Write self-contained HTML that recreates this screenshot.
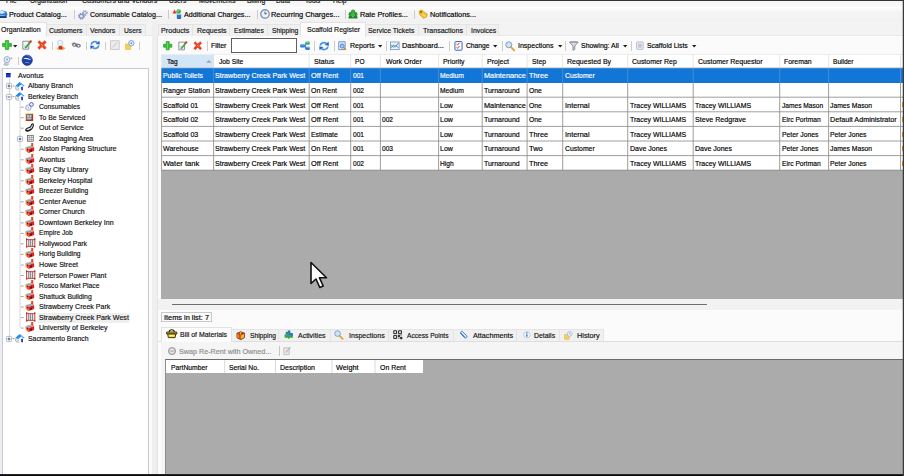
<!DOCTYPE html><html><head><meta charset="utf-8"><title>Scaffold Register</title><style>
*{box-sizing:border-box;margin:0;padding:0}
html,body{width:904px;height:476px;overflow:hidden}
body{position:relative;background:#f3f3f3;font-family:"Liberation Sans",sans-serif;font-size:8px;letter-spacing:0;color:#000;line-height:10px;-webkit-text-stroke:0.18px}
.a{position:absolute}
.t{position:absolute;white-space:nowrap;height:10px;line-height:10px;transform-origin:0 0}
.sep{position:absolute;width:1px}
.tab{position:absolute;background:#f0f0f0;border:1px solid #e4e4e4;border-bottom:none}
.tab.on{background:#fcfcfc;border-color:#e2e2e2}
svg{position:absolute;overflow:visible}
</style></head><body>
<div class="a" style="left:0px;top:0px;width:904px;height:8px;background:linear-gradient(#f4f4f4,#fbfbfb)"></div>
<div class="t" style="left:5.5px;top:-4.0px;transform:scaleX(0.820);color:#111">File</div>
<div class="t" style="left:29.5px;top:-4.0px;transform:scaleX(0.820);color:#111">Organization</div>
<div class="t" style="left:81.8px;top:-4.0px;transform:scaleX(0.876);color:#111">Customers and Vendors</div>
<div class="t" style="left:169.2px;top:-4.0px;transform:scaleX(0.828);color:#111">Users</div>
<div class="t" style="left:198.5px;top:-4.0px;transform:scaleX(0.883);color:#111">Movements</div>
<div class="t" style="left:246.5px;top:-4.0px;transform:scaleX(0.853);color:#111">Billing</div>
<div class="t" style="left:276.3px;top:-4.0px;transform:scaleX(0.820);color:#111">Data</div>
<div class="t" style="left:304.5px;top:-4.0px;transform:scaleX(0.820);color:#111">Tools</div>
<div class="t" style="left:332.8px;top:-4.0px;transform:scaleX(0.820);color:#111">Help</div>
<div class="a" style="left:0px;top:0px;width:904px;height:1px;background:linear-gradient(#111,#555)"></div>
<div class="a" style="left:0px;top:7px;width:904px;height:15px;background:linear-gradient(#ffffff,#f5f5f5 30%,#f1f1f1)"></div>
<div class="t" style="left:9.3px;top:10.2px;transform:scaleX(0.901);">Product Catalog...</div>
<div class="t" style="left:89.6px;top:10.2px;transform:scaleX(0.883);">Consumable Catalog...</div>
<div class="t" style="left:183.9px;top:10.2px;transform:scaleX(0.894);">Additional Charges...</div>
<div class="t" style="left:271.3px;top:10.2px;transform:scaleX(0.928);">Recurring Charges...</div>
<div class="t" style="left:360.0px;top:10.2px;transform:scaleX(0.913);">Rate Profiles...</div>
<div class="t" style="left:430.0px;top:10.2px;transform:scaleX(0.915);">Notifications...</div>
<div class="sep" style="left:74px;top:10px;height:9px;background:#cccccc"></div>
<div class="sep" style="left:168px;top:10px;height:9px;background:#cccccc"></div>
<div class="sep" style="left:257px;top:10px;height:9px;background:#cccccc"></div>
<div class="sep" style="left:345px;top:10px;height:9px;background:#cccccc"></div>
<div class="sep" style="left:414px;top:10px;height:9px;background:#cccccc"></div>
<svg style="left:-1px;top:9px" width="10" height="10" viewBox="0 0 10 10" preserveAspectRatio="none"><path d="M-1 4.4L2.4 1.2L7.4 2.6L8.4 5.4L7 8.6L-1 8.4z" fill="#2b7bd8"/><path d="M-0.6 3.6L2.6 1.6L6.6 3.2L3 5z" fill="#d6e8fb"/><path d="M-1 7.2h8.6v1.8H-1z" fill="#123f86"/><path d="M0.6 6.4h5" stroke="#9cc6f4" stroke-width="0.8"/></svg>
<svg style="left:77.5px;top:9.5px" width="10" height="10" viewBox="0 0 10 10" preserveAspectRatio="none"><circle cx="3.4" cy="6.2" r="2.5" fill="none" stroke="#8a92c9" stroke-width="1.7" stroke-dasharray="1.3 0.7"/><circle cx="3.4" cy="6.2" r="1.9" fill="none" stroke="#8a92c9" stroke-width="1.2"/><circle cx="6.9" cy="2.9" r="2" fill="none" stroke="#9aa2d4" stroke-width="1.5" stroke-dasharray="1.1 0.6"/><circle cx="6.9" cy="2.9" r="1.5" fill="none" stroke="#9aa2d4" stroke-width="1"/></svg>
<svg style="left:171.5px;top:9px" width="10" height="10" viewBox="0 0 10 10" preserveAspectRatio="none"><path d="M0.4 4.6L2.6 0.4L4.6 4.6z" fill="#e23a1c"/><circle cx="6.6" cy="2.6" r="2.3" fill="#3fae3a"/><circle cx="6" cy="2" r="0.8" fill="#9fe09a"/><path d="M4.8 5.2h4.4v4H4.8z" fill="#2f74d2"/><ellipse cx="7" cy="5.2" rx="2.2" ry="0.9" fill="#9cc4f4"/><ellipse cx="7" cy="9.2" rx="2.2" ry="0.7" fill="#1f58b0"/></svg>
<svg style="left:260.3px;top:9.3px" width="10" height="10" viewBox="0 0 10 10" preserveAspectRatio="none"><circle cx="5" cy="5" r="4.2" fill="#eef3fa" stroke="#7f96ba" stroke-width="1.4"/><path d="M5 2.6V5.2L6.8 4.2" fill="none" stroke="#3a4f7a" stroke-width="0.9"/></svg>
<svg style="left:348.4px;top:9.3px" width="10" height="10" viewBox="0 0 10 10" preserveAspectRatio="none"><circle cx="5" cy="2.6" r="2.2" fill="#3aa83c"/><circle cx="2.6" cy="5.2" r="2.1" fill="#2f9a35"/><circle cx="7.4" cy="5.2" r="2.1" fill="#2f9a35"/><path d="M0.4 9.4c0-2.4 1-3.2 2.4-3.2s2.2.8 2.2 3.2zM5 9.4c0-2.4 1-3.2 2.4-3.2s2.2.8 2.2 3.2z" fill="#1f8429"/><path d="M2.8 7c0-2 1-2.6 2.2-2.6S7.2 5 7.2 7z" fill="#45b848"/></svg>
<svg style="left:417.6px;top:9.3px" width="10" height="10" viewBox="0 0 10 10" preserveAspectRatio="none"><path d="M1 2.2L3.4 0.8L9.4 5.2L8.6 8L5.4 9.4L1.6 5.4z" fill="#f2c230" stroke="#c9921a" stroke-width="0.6"/><circle cx="3" cy="3" r="0.9" fill="#7a5310"/><path d="M4.6 5.4l2.6 2" stroke="#fff0a8" stroke-width="1"/></svg>
<div class="a" style="left:0px;top:36px;width:152px;height:440px;background:#fbfbfb"></div>
<div class="a" style="left:157px;top:36px;width:747px;height:440px;background:#fbfbfb;border-left:1px solid #e4e4e4"></div>
<div class="a" style="left:152px;top:22px;width:5px;height:454px;background:#efefef"></div>
<div class="a" style="left:0px;top:35px;width:152px;height:1px;background:#e9e9e9"></div>
<div class="a" style="left:157px;top:35px;width:747px;height:1px;background:#e9e9e9"></div>
<div class="tab" style="left:46px;top:24px;width:41px;height:12px"></div>
<div class="t" style="left:48.8px;top:26.0px;transform:scaleX(0.864);color:#111">Customers</div>
<div class="tab" style="left:86px;top:24px;width:34px;height:12px"></div>
<div class="t" style="left:90.4px;top:26.0px;transform:scaleX(0.862);color:#111">Vendors</div>
<div class="tab" style="left:119px;top:24px;width:27px;height:12px"></div>
<div class="t" style="left:123.8px;top:26.0px;transform:scaleX(0.842);color:#111">Users</div>
<div class="tab on" style="left:-1px;top:22px;width:48px;height:15px"></div>
<div class="t" style="left:1.0px;top:25.0px;transform:scaleX(0.873);color:#111">Organization</div>
<div class="tab" style="left:158px;top:24px;width:35px;height:12px"></div>
<div class="t" style="left:160.6px;top:26.0px;transform:scaleX(0.896);color:#111">Products</div>
<div class="tab" style="left:192px;top:24px;width:38px;height:12px"></div>
<div class="t" style="left:196.9px;top:26.0px;transform:scaleX(0.876);color:#111">Requests</div>
<div class="tab" style="left:229px;top:24px;width:39px;height:12px"></div>
<div class="t" style="left:234.2px;top:26.0px;transform:scaleX(0.848);color:#111">Estimates</div>
<div class="tab" style="left:267px;top:24px;width:34px;height:12px"></div>
<div class="t" style="left:272.4px;top:26.0px;transform:scaleX(0.841);color:#111">Shipping</div>
<div class="tab" style="left:365px;top:24px;width:54px;height:12px"></div>
<div class="t" style="left:368.3px;top:26.0px;transform:scaleX(0.862);color:#111">Service Tickets</div>
<div class="tab" style="left:418px;top:24px;width:49px;height:12px"></div>
<div class="t" style="left:423.0px;top:26.0px;transform:scaleX(0.877);color:#111">Transactions</div>
<div class="tab" style="left:466px;top:24px;width:33px;height:12px"></div>
<div class="t" style="left:471.2px;top:26.0px;transform:scaleX(0.859);color:#111">Invoices</div>
<div class="tab on" style="left:300px;top:22px;width:66px;height:15px"></div>
<div class="t" style="left:306.9px;top:25.0px;transform:scaleX(0.874);color:#111">Scaffold Register</div>
<div class="sep" style="left:52px;top:42px;height:8px;background:#cccccc"></div>
<div class="sep" style="left:86px;top:42px;height:8px;background:#cccccc"></div>
<div class="sep" style="left:105px;top:42px;height:8px;background:#cccccc"></div>
<div class="sep" style="left:139px;top:42px;height:8px;background:#cccccc"></div>
<div class="sep" style="left:18px;top:57px;height:8px;background:#cccccc"></div>
<svg style="left:1.5px;top:40.2px" width="10" height="10" viewBox="0 0 10 10" preserveAspectRatio="none"><path d="M3.4 0.6h3.2v2.8h2.8v3.2H6.6v2.8H3.4V6.6H0.6V3.4h2.8z" fill="#35c035" stroke="#1f9a22" stroke-width="0.7"/><path d="M4.2 1.6h1.2v6.8H4.2z" fill="#7ee27a" opacity=".7"/></svg>
<svg style="left:13.4px;top:45.2px" width="4.4" height="2.4" viewBox="0 0 4.4 2.4" preserveAspectRatio="none"><path d="M0 0h4.4L2.2 2.4z" fill="#1e1e1e"/></svg>
<svg style="left:21.8px;top:40.2px" width="10" height="10" viewBox="0 0 10 10" preserveAspectRatio="none"><path d="M0.8 1.2h6v8h-6z" fill="#f4f6fa" stroke="#76797f" stroke-width="0.8"/><path d="M2 7.6h3.4M2 6h2" stroke="#aab" stroke-width="0.6"/><path d="M3.2 6.8L7.6 1.6l1.3 1.1L4.5 7.9L2.9 8.4z" fill="#3ea63a"/><circle cx="8.6" cy="1.5" r="1.2" fill="#e02a2a"/></svg>
<svg style="left:36.8px;top:40.2px" width="10" height="10" viewBox="0 0 10 10" preserveAspectRatio="none"><path d="M1 2.2L2.4 0.8L5 3.2L7.6 0.8L9.2 2.2L6.6 5L9.2 7.8L7.6 9.2L5 6.6L2.4 9.2L0.8 7.8L3.4 5z" fill="#f0401e" stroke="#d92b14" stroke-width="0.6"/><path d="M4 4l2 2" stroke="#ffa050" stroke-width="1"/></svg>
<svg style="left:56.2px;top:40.4px" width="10" height="10" viewBox="0 0 10 10" preserveAspectRatio="none"><path d="M2 9.4c0-2.6 1-3.8 2.6-3.8S7.2 6.8 7.2 9.4z" fill="#e2261c"/><circle cx="4.2" cy="3" r="2.8" fill="#e4f0fb" stroke="#a8c4e0" stroke-width="0.6"/><circle cx="3.6" cy="2.4" r="1" fill="#ffffff"/><path d="M5.6 6l4 2.2l-2.8 1.6z" fill="#f7a021"/><path d="M0.6 8.2l2-1.2l.6 2.4l-2 .2z" fill="#f9b82a"/></svg>
<svg style="left:71px;top:40.4px" width="10" height="10" viewBox="0 0 10 10" preserveAspectRatio="none"><path d="M0.5 3.4L3 2L6 3.6L9.6 4.4L9.4 7L6.6 7.2L4.4 6.2L2 6z" fill="#7d828a"/><path d="M1 3.4L3 2.4L5.6 3.8" stroke="#d8dce2" stroke-width="0.7" fill="none"/><circle cx="3.3" cy="5" r="1.5" fill="#e2e6ec" stroke="#4a4d54" stroke-width="0.7"/><circle cx="7.5" cy="5.8" r="1.5" fill="#e2e6ec" stroke="#4a4d54" stroke-width="0.7"/></svg>
<svg style="left:90px;top:40.4px" width="10" height="10" viewBox="0 0 10 10" preserveAspectRatio="none"><path d="M1.2 4.6A3.8 3.4 0 0 1 7.4 2.4" fill="none" stroke="#4a96e6" stroke-width="1.7"/><path d="M5.6 4L9.8 4.6L9.4 0.8z" fill="#1f66c8"/><path d="M8.8 5.4A3.8 3.4 0 0 1 2.6 7.6" fill="none" stroke="#4a96e6" stroke-width="1.7"/><path d="M4.4 6L0.2 5.4L0.6 9.2z" fill="#1f66c8"/></svg>
<svg style="left:109.6px;top:40.4px" width="10" height="10" viewBox="0 0 10 10" preserveAspectRatio="none"><rect x="0.6" y="0.8" width="8.6" height="8.6" fill="#ececec" stroke="#c6c6c6" stroke-width="0.9"/><path d="M2.6 7.4L7 2.6" stroke="#cfcfcf" stroke-width="1.2"/></svg>
<svg style="left:124.8px;top:40.2px" width="10" height="10" viewBox="0 0 10 10" preserveAspectRatio="none"><path d="M0.6 4h5v5.4h-5z" fill="#f6d251" stroke="#e2b62e" stroke-width="0.6"/><circle cx="6.3" cy="3.2" r="2.7" fill="#eaf2fb" stroke="#7fa3d4" stroke-width="1"/><circle cx="6.3" cy="3.2" r="0.9" fill="#5b8bd0"/></svg>
<svg style="left:3px;top:55.6px" width="10" height="10" viewBox="0 0 10 10" preserveAspectRatio="none"><circle cx="4" cy="3.6" r="3" fill="#e3eefa" stroke="#9fb0c6" stroke-width="1"/><circle cx="4" cy="3.6" r="1" fill="#7fa8dc"/><path d="M2.2 6.4L0.8 8.6l3.4 1L6 7.6" fill="#c4cedd" stroke="#8592a8" stroke-width="0.6"/><rect x="7.6" y="1.6" width="1.6" height="1.6" fill="#9aa6c4"/></svg>
<svg style="left:21.9px;top:55.3px" width="10" height="10" viewBox="0 0 10 10" preserveAspectRatio="none"><circle cx="5.2" cy="5.2" r="5.2" fill="#1b3fa6"/><circle cx="5.2" cy="5.2" r="5.2" fill="none" stroke="#10286e" stroke-width="0.5"/><path d="M1.2 3.4C3.4 2.2 6 2.6 9.4 5.2C6.4 4.2 4 4 1.2 3.4z" fill="#e8eefc"/><path d="M2.4 7.6c2-.6 4-.4 6 .6C6.4 8.2 4.4 8.2 2.4 7.6z" fill="#9db4ec"/><path d="M4.8 0.4c2 .6 3.6 1.8 4.8 3.6" stroke="#7f9ce4" stroke-width="0.7" fill="none"/></svg>
<div class="a" style="left:2px;top:68px;width:147px;height:408px;background:#fff;border:1px solid #c3ccd6;border-bottom:none"></div>
<div class="a" style="left:0px;top:68px;width:2px;height:408px;background:#eceef1"></div>
<svg style="left:0px;top:0px" width="150" height="476" viewBox="0 0 150 476" preserveAspectRatio="none"><path d="M9.5 79.4V338.4" stroke="#9a9a9a" stroke-width="0.8" stroke-dasharray="1 1"/><path d="M20 101.4V327.9" stroke="#9a9a9a" stroke-width="0.8" stroke-dasharray="1 1"/><path d="M12.5 86.1h2" stroke="#8a8a8a" stroke-width="0.8"/><path d="M12.5 96.6h2" stroke="#8a8a8a" stroke-width="0.8"/><path d="M20.8 107.2h2.8" stroke="#8c8c8c" stroke-width="0.8"/><path d="M20.8 117.7h2.8" stroke="#8c8c8c" stroke-width="0.8"/><path d="M20.8 128.2h2.8" stroke="#8c8c8c" stroke-width="0.8"/><path d="M20.8 149.2h2.8" stroke="#8c8c8c" stroke-width="0.8"/><path d="M20.8 159.8h2.8" stroke="#8c8c8c" stroke-width="0.8"/><path d="M20.8 170.3h2.8" stroke="#8c8c8c" stroke-width="0.8"/><path d="M20.8 180.8h2.8" stroke="#8c8c8c" stroke-width="0.8"/><path d="M20.8 191.3h2.8" stroke="#8c8c8c" stroke-width="0.8"/><path d="M20.8 201.8h2.8" stroke="#8c8c8c" stroke-width="0.8"/><path d="M20.8 212.4h2.8" stroke="#8c8c8c" stroke-width="0.8"/><path d="M20.8 222.9h2.8" stroke="#8c8c8c" stroke-width="0.8"/><path d="M20.8 233.4h2.8" stroke="#8c8c8c" stroke-width="0.8"/><path d="M20.8 243.9h2.8" stroke="#8c8c8c" stroke-width="0.8"/><path d="M20.8 254.4h2.8" stroke="#8c8c8c" stroke-width="0.8"/><path d="M20.8 265.0h2.8" stroke="#8c8c8c" stroke-width="0.8"/><path d="M20.8 275.5h2.8" stroke="#8c8c8c" stroke-width="0.8"/><path d="M20.8 286.0h2.8" stroke="#8c8c8c" stroke-width="0.8"/><path d="M20.8 296.5h2.8" stroke="#8c8c8c" stroke-width="0.8"/><path d="M20.8 307.0h2.8" stroke="#8c8c8c" stroke-width="0.8"/><path d="M20.8 317.6h2.8" stroke="#8c8c8c" stroke-width="0.8"/><path d="M20.8 328.1h2.8" stroke="#8c8c8c" stroke-width="0.8"/><path d="M12.5 338.6h2" stroke="#8a8a8a" stroke-width="0.8"/></svg>
<div class="t" style="left:17.7px;top:70.6px;transform:scaleX(0.893);color:#111;">Avontus</div>
<svg style="left:6.2px;top:72.9px" width="5" height="5" viewBox="0 0 5 5" preserveAspectRatio="none"><rect x="0" y="0.4" width="4.6" height="4" fill="#2136c4"/><rect x="0" y="0" width="4.6" height="1.1" fill="#101c8a"/></svg>
<div class="t" style="left:28.2px;top:81.1px;transform:scaleX(0.865);color:#111;">Albany Branch</div>
<svg style="left:15px;top:81.62px" width="9.4" height="8.8" viewBox="0 0 10 10" preserveAspectRatio="none"><circle cx="3.2" cy="6.6" r="2.8" fill="#e4e4e6" stroke="#a2a2a8" stroke-width="0.8"/><path d="M3.8 4.2L6.6 2L9.6 4.6V9H3.8z" fill="#fbfcfe"/><path d="M0.6 4.2L4.6 0.4L7.2 2.2L3.4 5.6z" fill="#1f8cf0"/><path d="M4.6 0.4L9.8 4.6" stroke="#3f9af0" stroke-width="1.1" fill="none"/><path d="M6.6 5.4h1.8v4H6.6z" fill="#1030d0"/><path d="M3 6.2l1 1.6" stroke="#8a8a92" stroke-width="0.7"/></svg>
<div class="t" style="left:28.2px;top:91.6px;transform:scaleX(0.853);color:#111;">Berkeley Branch</div>
<svg style="left:15px;top:92.14px" width="9.4" height="8.8" viewBox="0 0 10 10" preserveAspectRatio="none"><circle cx="3.2" cy="6.6" r="2.8" fill="#e4e4e6" stroke="#a2a2a8" stroke-width="0.8"/><path d="M3.8 4.2L6.6 2L9.6 4.6V9H3.8z" fill="#fbfcfe"/><path d="M0.6 4.2L4.6 0.4L7.2 2.2L3.4 5.6z" fill="#1f8cf0"/><path d="M4.6 0.4L9.8 4.6" stroke="#3f9af0" stroke-width="1.1" fill="none"/><path d="M6.6 5.4h1.8v4H6.6z" fill="#1030d0"/><path d="M3 6.2l1 1.6" stroke="#8a8a92" stroke-width="0.7"/></svg>
<div class="t" style="left:38.6px;top:102.2px;transform:scaleX(0.842);color:#111;">Consumables</div>
<svg style="left:25.4px;top:102.36000000000001px" width="9.4" height="9.4" viewBox="0 0 10 10" preserveAspectRatio="none"><circle cx="3.6" cy="6" r="2.9" fill="#eef0f7" stroke="#8f98c0" stroke-width="0.9"/><circle cx="6.9" cy="2.6" r="2" fill="#f2f4fa" stroke="#4658b4" stroke-width="1"/><circle cx="3.6" cy="6" r="0.8" fill="#a4acd0"/></svg>
<div class="t" style="left:38.6px;top:112.7px;transform:scaleX(0.859);color:#111;">To Be Serviced</div>
<svg style="left:25.4px;top:113.18px" width="8.8" height="8.8" viewBox="0 0 10 10" preserveAspectRatio="none"><rect x="0.6" y="0.6" width="8.6" height="8.6" fill="#f0a21c"/><path d="M9.2 0.6V9.2H0.6L2 7.8H7.8V2z" fill="#d8281c"/><rect x="2" y="2" width="5.8" height="5.8" fill="#cfd2dc" stroke="#3c4258" stroke-width="0.7"/><path d="M4.9 2v3.4M2 5.4h5.8" stroke="#555a70" stroke-width="0.6"/></svg>
<div class="t" style="left:38.6px;top:123.2px;transform:scaleX(0.882);color:#111;">Out of Service</div>
<svg style="left:25.4px;top:123.4px" width="9.4" height="9.4" viewBox="0 0 10 10" preserveAspectRatio="none"><path d="M0.8 7C1.4 5.4 4 5.2 5.6 4.2C6.8 3.4 6.4 1.6 7.6 1C8.8 0.6 9.4 2.2 8.6 3.8C7.8 5.8 5.8 8.2 3 8.6C1.6 8.8 0.4 8.2 0.8 7z" fill="#e9e9e9" stroke="#1e1e22" stroke-width="1.2"/><path d="M1 7.4C2.4 8.6 5 8 6.6 6.2" stroke="#1e1e22" stroke-width="1.4" fill="none"/></svg>
<div class="t" style="left:38.6px;top:133.7px;transform:scaleX(0.878);color:#111;">Zoo Staging Area</div>
<svg style="left:26.6px;top:134.82000000000002px" width="7.8" height="7.4" viewBox="0 0 10 10" preserveAspectRatio="none"><rect x="0.6" y="0.6" width="7.4" height="7.8" fill="#fafafa" stroke="#4c4f57" stroke-width="0.9"/><path d="M3 0.6v7.8M5.6 0.6v7.8M0.6 3.2h7.4M0.6 5.8h7.4" stroke="#7c808a" stroke-width="0.7"/></svg>
<div class="t" style="left:38.6px;top:144.2px;transform:scaleX(0.899);color:#111;">Alston Parking Structure</div>
<svg style="left:24.8px;top:143.04000000000002px" width="9.6" height="10.2" viewBox="0 0 10 10" preserveAspectRatio="none"><path d="M6.3 0h2.3v4H6.3z" fill="#e63c1a"/><path d="M6.6 0.6h1v1.2h-1z" fill="#f9b02a"/><path d="M3.6 5.9L9.4 4L9.6 7.8L3.8 9.7z" fill="#e6201a"/><path d="M0.3 4.2L1.6 4.9L1.8 8.5L0.6 7.6z" fill="#f7a11a"/><path d="M1.6 4.9L3.6 5.9L3.8 9.7L1.8 8.5z" fill="#e8281a"/><path d="M0.4 4.1L5.8 2.6L9.4 3.9L3.6 5.9z" fill="#9da1a9"/><path d="M1.6 4L5.8 2.9L8 3.7" stroke="#c8ccd4" stroke-width="0.6" fill="none"/><path d="M2 5.3L3.3 6V7L2 6.4z" fill="#1c2240"/><path d="M2.5 7.3L3.5 7.8V8.7L2.5 8.1z" fill="#fbc02a"/><path d="M5.6 6.9L7.2 6.4V8L5.6 8.5z" fill="#2a1030"/></svg>
<div class="t" style="left:38.6px;top:154.8px;transform:scaleX(0.904);color:#111;">Avontus</div>
<svg style="left:24.8px;top:153.56px" width="9.6" height="10.2" viewBox="0 0 10 10" preserveAspectRatio="none"><path d="M6.3 0h2.3v4H6.3z" fill="#e63c1a"/><path d="M6.6 0.6h1v1.2h-1z" fill="#f9b02a"/><path d="M3.6 5.9L9.4 4L9.6 7.8L3.8 9.7z" fill="#e6201a"/><path d="M0.3 4.2L1.6 4.9L1.8 8.5L0.6 7.6z" fill="#f7a11a"/><path d="M1.6 4.9L3.6 5.9L3.8 9.7L1.8 8.5z" fill="#e8281a"/><path d="M0.4 4.1L5.8 2.6L9.4 3.9L3.6 5.9z" fill="#9da1a9"/><path d="M1.6 4L5.8 2.9L8 3.7" stroke="#c8ccd4" stroke-width="0.6" fill="none"/><path d="M2 5.3L3.3 6V7L2 6.4z" fill="#1c2240"/><path d="M2.5 7.3L3.5 7.8V8.7L2.5 8.1z" fill="#fbc02a"/><path d="M5.6 6.9L7.2 6.4V8L5.6 8.5z" fill="#2a1030"/></svg>
<div class="t" style="left:38.6px;top:165.3px;transform:scaleX(0.873);color:#111;">Bay City Library</div>
<svg style="left:24.8px;top:164.07999999999998px" width="9.6" height="10.2" viewBox="0 0 10 10" preserveAspectRatio="none"><path d="M6.3 0h2.3v4H6.3z" fill="#e63c1a"/><path d="M6.6 0.6h1v1.2h-1z" fill="#f9b02a"/><path d="M3.6 5.9L9.4 4L9.6 7.8L3.8 9.7z" fill="#e6201a"/><path d="M0.3 4.2L1.6 4.9L1.8 8.5L0.6 7.6z" fill="#f7a11a"/><path d="M1.6 4.9L3.6 5.9L3.8 9.7L1.8 8.5z" fill="#e8281a"/><path d="M0.4 4.1L5.8 2.6L9.4 3.9L3.6 5.9z" fill="#9da1a9"/><path d="M1.6 4L5.8 2.9L8 3.7" stroke="#c8ccd4" stroke-width="0.6" fill="none"/><path d="M2 5.3L3.3 6V7L2 6.4z" fill="#1c2240"/><path d="M2.5 7.3L3.5 7.8V8.7L2.5 8.1z" fill="#fbc02a"/><path d="M5.6 6.9L7.2 6.4V8L5.6 8.5z" fill="#2a1030"/></svg>
<div class="t" style="left:38.6px;top:175.8px;transform:scaleX(0.856);color:#111;">Berkeley Hospital</div>
<svg style="left:24.8px;top:174.6px" width="9.6" height="10.2" viewBox="0 0 10 10" preserveAspectRatio="none"><path d="M6.3 0h2.3v4H6.3z" fill="#e63c1a"/><path d="M6.6 0.6h1v1.2h-1z" fill="#f9b02a"/><path d="M3.6 5.9L9.4 4L9.6 7.8L3.8 9.7z" fill="#e6201a"/><path d="M0.3 4.2L1.6 4.9L1.8 8.5L0.6 7.6z" fill="#f7a11a"/><path d="M1.6 4.9L3.6 5.9L3.8 9.7L1.8 8.5z" fill="#e8281a"/><path d="M0.4 4.1L5.8 2.6L9.4 3.9L3.6 5.9z" fill="#9da1a9"/><path d="M1.6 4L5.8 2.9L8 3.7" stroke="#c8ccd4" stroke-width="0.6" fill="none"/><path d="M2 5.3L3.3 6V7L2 6.4z" fill="#1c2240"/><path d="M2.5 7.3L3.5 7.8V8.7L2.5 8.1z" fill="#fbc02a"/><path d="M5.6 6.9L7.2 6.4V8L5.6 8.5z" fill="#2a1030"/></svg>
<div class="t" style="left:38.6px;top:186.3px;transform:scaleX(0.838);color:#111;">Breezer Building</div>
<svg style="left:24.8px;top:185.12px" width="9.6" height="10.2" viewBox="0 0 10 10" preserveAspectRatio="none"><path d="M6.3 0h2.3v4H6.3z" fill="#e63c1a"/><path d="M6.6 0.6h1v1.2h-1z" fill="#f9b02a"/><path d="M3.6 5.9L9.4 4L9.6 7.8L3.8 9.7z" fill="#e6201a"/><path d="M0.3 4.2L1.6 4.9L1.8 8.5L0.6 7.6z" fill="#f7a11a"/><path d="M1.6 4.9L3.6 5.9L3.8 9.7L1.8 8.5z" fill="#e8281a"/><path d="M0.4 4.1L5.8 2.6L9.4 3.9L3.6 5.9z" fill="#9da1a9"/><path d="M1.6 4L5.8 2.9L8 3.7" stroke="#c8ccd4" stroke-width="0.6" fill="none"/><path d="M2 5.3L3.3 6V7L2 6.4z" fill="#1c2240"/><path d="M2.5 7.3L3.5 7.8V8.7L2.5 8.1z" fill="#fbc02a"/><path d="M5.6 6.9L7.2 6.4V8L5.6 8.5z" fill="#2a1030"/></svg>
<div class="t" style="left:38.6px;top:196.8px;transform:scaleX(0.896);color:#111;">Center Avenue</div>
<svg style="left:24.8px;top:195.64px" width="9.6" height="10.2" viewBox="0 0 10 10" preserveAspectRatio="none"><path d="M6.3 0h2.3v4H6.3z" fill="#e63c1a"/><path d="M6.6 0.6h1v1.2h-1z" fill="#f9b02a"/><path d="M3.6 5.9L9.4 4L9.6 7.8L3.8 9.7z" fill="#e6201a"/><path d="M0.3 4.2L1.6 4.9L1.8 8.5L0.6 7.6z" fill="#f7a11a"/><path d="M1.6 4.9L3.6 5.9L3.8 9.7L1.8 8.5z" fill="#e8281a"/><path d="M0.4 4.1L5.8 2.6L9.4 3.9L3.6 5.9z" fill="#9da1a9"/><path d="M1.6 4L5.8 2.9L8 3.7" stroke="#c8ccd4" stroke-width="0.6" fill="none"/><path d="M2 5.3L3.3 6V7L2 6.4z" fill="#1c2240"/><path d="M2.5 7.3L3.5 7.8V8.7L2.5 8.1z" fill="#fbc02a"/><path d="M5.6 6.9L7.2 6.4V8L5.6 8.5z" fill="#2a1030"/></svg>
<div class="t" style="left:38.6px;top:207.4px;transform:scaleX(0.871);color:#111;">Corner Church</div>
<svg style="left:24.8px;top:206.16px" width="9.6" height="10.2" viewBox="0 0 10 10" preserveAspectRatio="none"><path d="M6.3 0h2.3v4H6.3z" fill="#e63c1a"/><path d="M6.6 0.6h1v1.2h-1z" fill="#f9b02a"/><path d="M3.6 5.9L9.4 4L9.6 7.8L3.8 9.7z" fill="#e6201a"/><path d="M0.3 4.2L1.6 4.9L1.8 8.5L0.6 7.6z" fill="#f7a11a"/><path d="M1.6 4.9L3.6 5.9L3.8 9.7L1.8 8.5z" fill="#e8281a"/><path d="M0.4 4.1L5.8 2.6L9.4 3.9L3.6 5.9z" fill="#9da1a9"/><path d="M1.6 4L5.8 2.9L8 3.7" stroke="#c8ccd4" stroke-width="0.6" fill="none"/><path d="M2 5.3L3.3 6V7L2 6.4z" fill="#1c2240"/><path d="M2.5 7.3L3.5 7.8V8.7L2.5 8.1z" fill="#fbc02a"/><path d="M5.6 6.9L7.2 6.4V8L5.6 8.5z" fill="#2a1030"/></svg>
<div class="t" style="left:38.6px;top:217.9px;transform:scaleX(0.888);color:#111;">Downtown Berkeley Inn</div>
<svg style="left:24.8px;top:216.68px" width="9.6" height="10.2" viewBox="0 0 10 10" preserveAspectRatio="none"><path d="M6.3 0h2.3v4H6.3z" fill="#e63c1a"/><path d="M6.6 0.6h1v1.2h-1z" fill="#f9b02a"/><path d="M3.6 5.9L9.4 4L9.6 7.8L3.8 9.7z" fill="#e6201a"/><path d="M0.3 4.2L1.6 4.9L1.8 8.5L0.6 7.6z" fill="#f7a11a"/><path d="M1.6 4.9L3.6 5.9L3.8 9.7L1.8 8.5z" fill="#e8281a"/><path d="M0.4 4.1L5.8 2.6L9.4 3.9L3.6 5.9z" fill="#9da1a9"/><path d="M1.6 4L5.8 2.9L8 3.7" stroke="#c8ccd4" stroke-width="0.6" fill="none"/><path d="M2 5.3L3.3 6V7L2 6.4z" fill="#1c2240"/><path d="M2.5 7.3L3.5 7.8V8.7L2.5 8.1z" fill="#fbc02a"/><path d="M5.6 6.9L7.2 6.4V8L5.6 8.5z" fill="#2a1030"/></svg>
<div class="t" style="left:38.6px;top:228.4px;transform:scaleX(0.833);color:#111;">Empire Job</div>
<svg style="left:24.8px;top:227.2px" width="9.6" height="10.2" viewBox="0 0 10 10" preserveAspectRatio="none"><path d="M6.3 0h2.3v4H6.3z" fill="#e63c1a"/><path d="M6.6 0.6h1v1.2h-1z" fill="#f9b02a"/><path d="M3.6 5.9L9.4 4L9.6 7.8L3.8 9.7z" fill="#e6201a"/><path d="M0.3 4.2L1.6 4.9L1.8 8.5L0.6 7.6z" fill="#f7a11a"/><path d="M1.6 4.9L3.6 5.9L3.8 9.7L1.8 8.5z" fill="#e8281a"/><path d="M0.4 4.1L5.8 2.6L9.4 3.9L3.6 5.9z" fill="#9da1a9"/><path d="M1.6 4L5.8 2.9L8 3.7" stroke="#c8ccd4" stroke-width="0.6" fill="none"/><path d="M2 5.3L3.3 6V7L2 6.4z" fill="#1c2240"/><path d="M2.5 7.3L3.5 7.8V8.7L2.5 8.1z" fill="#fbc02a"/><path d="M5.6 6.9L7.2 6.4V8L5.6 8.5z" fill="#2a1030"/></svg>
<div class="t" style="left:38.6px;top:238.9px;transform:scaleX(0.864);color:#111;">Hollywood Park</div>
<svg style="left:25.6px;top:239.02px" width="9.7" height="8.8" viewBox="0 0 10 10" preserveAspectRatio="none"><rect x="0.5" y="0.5" width="8.8" height="8.2" fill="#fff"/><path d="M0.7 -0.2V9.2M9.1 -0.2V9.2" stroke="#d6231a" stroke-width="1"/><path d="M0.4 0.7H9.4M0.4 8.4H9.4" stroke="#d6231a" stroke-width="0.9"/><path d="M2.9 0.8V8.4M4.9 0.8V8.4M6.9 0.8V8.4" stroke="#3a3a40" stroke-width="0.8"/><path d="M0 -0.2h1.4M8.4 -0.2h1.4M0 9.2h1.4M8.4 9.2h1.4" stroke="#222" stroke-width="0.8"/></svg>
<div class="t" style="left:38.6px;top:249.4px;transform:scaleX(0.835);color:#111;">Horig Building</div>
<svg style="left:24.8px;top:248.24px" width="9.6" height="10.2" viewBox="0 0 10 10" preserveAspectRatio="none"><path d="M6.3 0h2.3v4H6.3z" fill="#e63c1a"/><path d="M6.6 0.6h1v1.2h-1z" fill="#f9b02a"/><path d="M3.6 5.9L9.4 4L9.6 7.8L3.8 9.7z" fill="#e6201a"/><path d="M0.3 4.2L1.6 4.9L1.8 8.5L0.6 7.6z" fill="#f7a11a"/><path d="M1.6 4.9L3.6 5.9L3.8 9.7L1.8 8.5z" fill="#e8281a"/><path d="M0.4 4.1L5.8 2.6L9.4 3.9L3.6 5.9z" fill="#9da1a9"/><path d="M1.6 4L5.8 2.9L8 3.7" stroke="#c8ccd4" stroke-width="0.6" fill="none"/><path d="M2 5.3L3.3 6V7L2 6.4z" fill="#1c2240"/><path d="M2.5 7.3L3.5 7.8V8.7L2.5 8.1z" fill="#fbc02a"/><path d="M5.6 6.9L7.2 6.4V8L5.6 8.5z" fill="#2a1030"/></svg>
<div class="t" style="left:38.6px;top:260.0px;transform:scaleX(0.888);color:#111;">Howe Street</div>
<svg style="left:24.8px;top:258.76px" width="9.6" height="10.2" viewBox="0 0 10 10" preserveAspectRatio="none"><path d="M6.3 0h2.3v4H6.3z" fill="#e63c1a"/><path d="M6.6 0.6h1v1.2h-1z" fill="#f9b02a"/><path d="M3.6 5.9L9.4 4L9.6 7.8L3.8 9.7z" fill="#e6201a"/><path d="M0.3 4.2L1.6 4.9L1.8 8.5L0.6 7.6z" fill="#f7a11a"/><path d="M1.6 4.9L3.6 5.9L3.8 9.7L1.8 8.5z" fill="#e8281a"/><path d="M0.4 4.1L5.8 2.6L9.4 3.9L3.6 5.9z" fill="#9da1a9"/><path d="M1.6 4L5.8 2.9L8 3.7" stroke="#c8ccd4" stroke-width="0.6" fill="none"/><path d="M2 5.3L3.3 6V7L2 6.4z" fill="#1c2240"/><path d="M2.5 7.3L3.5 7.8V8.7L2.5 8.1z" fill="#fbc02a"/><path d="M5.6 6.9L7.2 6.4V8L5.6 8.5z" fill="#2a1030"/></svg>
<div class="t" style="left:38.6px;top:270.5px;transform:scaleX(0.870);color:#111;">Peterson Power Plant</div>
<svg style="left:25.6px;top:270.58px" width="9.7" height="8.8" viewBox="0 0 10 10" preserveAspectRatio="none"><rect x="0.5" y="0.5" width="8.8" height="8.2" fill="#fff"/><path d="M0.7 -0.2V9.2M9.1 -0.2V9.2" stroke="#d6231a" stroke-width="1"/><path d="M0.4 0.7H9.4M0.4 8.4H9.4" stroke="#d6231a" stroke-width="0.9"/><path d="M2.9 0.8V8.4M4.9 0.8V8.4M6.9 0.8V8.4" stroke="#3a3a40" stroke-width="0.8"/><path d="M0 -0.2h1.4M8.4 -0.2h1.4M0 9.2h1.4M8.4 9.2h1.4" stroke="#222" stroke-width="0.8"/></svg>
<div class="t" style="left:38.6px;top:281.0px;transform:scaleX(0.845);color:#111;">Rosco Market Place</div>
<svg style="left:24.8px;top:279.79999999999995px" width="9.6" height="10.2" viewBox="0 0 10 10" preserveAspectRatio="none"><path d="M6.3 0h2.3v4H6.3z" fill="#e63c1a"/><path d="M6.6 0.6h1v1.2h-1z" fill="#f9b02a"/><path d="M3.6 5.9L9.4 4L9.6 7.8L3.8 9.7z" fill="#e6201a"/><path d="M0.3 4.2L1.6 4.9L1.8 8.5L0.6 7.6z" fill="#f7a11a"/><path d="M1.6 4.9L3.6 5.9L3.8 9.7L1.8 8.5z" fill="#e8281a"/><path d="M0.4 4.1L5.8 2.6L9.4 3.9L3.6 5.9z" fill="#9da1a9"/><path d="M1.6 4L5.8 2.9L8 3.7" stroke="#c8ccd4" stroke-width="0.6" fill="none"/><path d="M2 5.3L3.3 6V7L2 6.4z" fill="#1c2240"/><path d="M2.5 7.3L3.5 7.8V8.7L2.5 8.1z" fill="#fbc02a"/><path d="M5.6 6.9L7.2 6.4V8L5.6 8.5z" fill="#2a1030"/></svg>
<div class="t" style="left:38.6px;top:291.5px;transform:scaleX(0.852);color:#111;">Shattuck Building</div>
<svg style="left:24.8px;top:290.32px" width="9.6" height="10.2" viewBox="0 0 10 10" preserveAspectRatio="none"><path d="M6.3 0h2.3v4H6.3z" fill="#e63c1a"/><path d="M6.6 0.6h1v1.2h-1z" fill="#f9b02a"/><path d="M3.6 5.9L9.4 4L9.6 7.8L3.8 9.7z" fill="#e6201a"/><path d="M0.3 4.2L1.6 4.9L1.8 8.5L0.6 7.6z" fill="#f7a11a"/><path d="M1.6 4.9L3.6 5.9L3.8 9.7L1.8 8.5z" fill="#e8281a"/><path d="M0.4 4.1L5.8 2.6L9.4 3.9L3.6 5.9z" fill="#9da1a9"/><path d="M1.6 4L5.8 2.9L8 3.7" stroke="#c8ccd4" stroke-width="0.6" fill="none"/><path d="M2 5.3L3.3 6V7L2 6.4z" fill="#1c2240"/><path d="M2.5 7.3L3.5 7.8V8.7L2.5 8.1z" fill="#fbc02a"/><path d="M5.6 6.9L7.2 6.4V8L5.6 8.5z" fill="#2a1030"/></svg>
<div class="t" style="left:38.6px;top:302.0px;transform:scaleX(0.882);color:#111;">Strawberry Creek Park</div>
<svg style="left:24.8px;top:300.84000000000003px" width="9.6" height="10.2" viewBox="0 0 10 10" preserveAspectRatio="none"><path d="M6.3 0h2.3v4H6.3z" fill="#e63c1a"/><path d="M6.6 0.6h1v1.2h-1z" fill="#f9b02a"/><path d="M3.6 5.9L9.4 4L9.6 7.8L3.8 9.7z" fill="#e6201a"/><path d="M0.3 4.2L1.6 4.9L1.8 8.5L0.6 7.6z" fill="#f7a11a"/><path d="M1.6 4.9L3.6 5.9L3.8 9.7L1.8 8.5z" fill="#e8281a"/><path d="M0.4 4.1L5.8 2.6L9.4 3.9L3.6 5.9z" fill="#9da1a9"/><path d="M1.6 4L5.8 2.9L8 3.7" stroke="#c8ccd4" stroke-width="0.6" fill="none"/><path d="M2 5.3L3.3 6V7L2 6.4z" fill="#1c2240"/><path d="M2.5 7.3L3.5 7.8V8.7L2.5 8.1z" fill="#fbc02a"/><path d="M5.6 6.9L7.2 6.4V8L5.6 8.5z" fill="#2a1030"/></svg>
<div class="t" style="left:38.6px;top:312.6px;transform:scaleX(0.889);color:#111;background:#efefef;padding:0 1px;margin-left:-1px">Strawberry Creek Park West</div>
<svg style="left:25.6px;top:312.66px" width="9.7" height="8.8" viewBox="0 0 10 10" preserveAspectRatio="none"><rect x="0.5" y="0.5" width="8.8" height="8.2" fill="#fff"/><path d="M0.7 -0.2V9.2M9.1 -0.2V9.2" stroke="#d6231a" stroke-width="1"/><path d="M0.4 0.7H9.4M0.4 8.4H9.4" stroke="#d6231a" stroke-width="0.9"/><path d="M2.9 0.8V8.4M4.9 0.8V8.4M6.9 0.8V8.4" stroke="#3a3a40" stroke-width="0.8"/><path d="M0 -0.2h1.4M8.4 -0.2h1.4M0 9.2h1.4M8.4 9.2h1.4" stroke="#222" stroke-width="0.8"/></svg>
<div class="t" style="left:38.6px;top:323.1px;transform:scaleX(0.887);color:#111;">University of Berkeley</div>
<svg style="left:24.8px;top:321.88px" width="9.6" height="10.2" viewBox="0 0 10 10" preserveAspectRatio="none"><path d="M6.3 0h2.3v4H6.3z" fill="#e63c1a"/><path d="M6.6 0.6h1v1.2h-1z" fill="#f9b02a"/><path d="M3.6 5.9L9.4 4L9.6 7.8L3.8 9.7z" fill="#e6201a"/><path d="M0.3 4.2L1.6 4.9L1.8 8.5L0.6 7.6z" fill="#f7a11a"/><path d="M1.6 4.9L3.6 5.9L3.8 9.7L1.8 8.5z" fill="#e8281a"/><path d="M0.4 4.1L5.8 2.6L9.4 3.9L3.6 5.9z" fill="#9da1a9"/><path d="M1.6 4L5.8 2.9L8 3.7" stroke="#c8ccd4" stroke-width="0.6" fill="none"/><path d="M2 5.3L3.3 6V7L2 6.4z" fill="#1c2240"/><path d="M2.5 7.3L3.5 7.8V8.7L2.5 8.1z" fill="#fbc02a"/><path d="M5.6 6.9L7.2 6.4V8L5.6 8.5z" fill="#2a1030"/></svg>
<div class="t" style="left:28.2px;top:333.6px;transform:scaleX(0.857);color:#111;">Sacramento Branch</div>
<svg style="left:15px;top:334.09999999999997px" width="9.4" height="8.8" viewBox="0 0 10 10" preserveAspectRatio="none"><circle cx="3.2" cy="6.6" r="2.8" fill="#e4e4e6" stroke="#a2a2a8" stroke-width="0.8"/><path d="M3.8 4.2L6.6 2L9.6 4.6V9H3.8z" fill="#fbfcfe"/><path d="M0.6 4.2L4.6 0.4L7.2 2.2L3.4 5.6z" fill="#1f8cf0"/><path d="M4.6 0.4L9.8 4.6" stroke="#3f9af0" stroke-width="1.1" fill="none"/><path d="M6.6 5.4h1.8v4H6.6z" fill="#1030d0"/><path d="M3 6.2l1 1.6" stroke="#8a8a92" stroke-width="0.7"/></svg>
<svg style="left:6.3px;top:83.02px" width="6" height="6" viewBox="0 0 6 6" preserveAspectRatio="none"><rect x="0.4" y="0.4" width="5.2" height="5.2" rx="1" fill="#fdfdfd" stroke="#a6a6a6" stroke-width="0.8"/><path d="M1.6 3h2.8M3 1.6v2.8" stroke="#2a48b0" stroke-width="0.9"/></svg>
<svg style="left:6.3px;top:93.53999999999999px" width="6" height="6" viewBox="0 0 6 6" preserveAspectRatio="none"><rect x="0.4" y="0.4" width="5.2" height="5.2" rx="1" fill="#fdfdfd" stroke="#a6a6a6" stroke-width="0.8"/><path d="M1.6 3h2.8" stroke="#2a48b0" stroke-width="0.9"/></svg>
<svg style="left:17px;top:135.62px" width="6" height="6" viewBox="0 0 6 6" preserveAspectRatio="none"><rect x="0.4" y="0.4" width="5.2" height="5.2" rx="1" fill="#fdfdfd" stroke="#a6a6a6" stroke-width="0.8"/><path d="M1.6 3h2.8M3 1.6v2.8" stroke="#2a48b0" stroke-width="0.9"/></svg>
<svg style="left:6.3px;top:335.5px" width="6" height="6" viewBox="0 0 6 6" preserveAspectRatio="none"><rect x="0.4" y="0.4" width="5.2" height="5.2" rx="1" fill="#fdfdfd" stroke="#a6a6a6" stroke-width="0.8"/><path d="M1.6 3h2.8M3 1.6v2.8" stroke="#2a48b0" stroke-width="0.9"/></svg>
<div class="t" style="left:211.4px;top:41.0px;transform:scaleX(0.860);">Filter</div>
<div class="a" style="left:231px;top:38px;width:66px;height:15px;background:#fff;border:1px solid #5f5f5f"></div>
<div class="sep" style="left:207px;top:41px;height:10px;background:#cccccc"></div>
<div class="sep" style="left:314px;top:41px;height:10px;background:#cccccc"></div>
<div class="sep" style="left:334px;top:41px;height:10px;background:#cccccc"></div>
<div class="sep" style="left:386px;top:41px;height:10px;background:#cccccc"></div>
<div class="sep" style="left:449px;top:41px;height:10px;background:#cccccc"></div>
<div class="sep" style="left:502px;top:41px;height:10px;background:#cccccc"></div>
<div class="sep" style="left:565px;top:41px;height:10px;background:#cccccc"></div>
<div class="sep" style="left:631px;top:41px;height:10px;background:#cccccc"></div>
<div class="t" style="left:349.5px;top:40.8px;transform:scaleX(0.882);">Reports</div>
<div class="t" style="left:401.7px;top:40.8px;transform:scaleX(0.912);">Dashboard...</div>
<div class="t" style="left:465.8px;top:40.8px;transform:scaleX(0.842);">Change</div>
<div class="t" style="left:518.0px;top:40.8px;transform:scaleX(0.877);">Inspections</div>
<div class="t" style="left:581.2px;top:40.8px;transform:scaleX(0.867);">Showing: All</div>
<div class="t" style="left:647.0px;top:40.8px;transform:scaleX(0.860);">Scaffold Lists</div>
<svg style="left:377.8px;top:45px" width="4.4" height="2.4" viewBox="0 0 4.4 2.4" preserveAspectRatio="none"><path d="M0 0h4.4L2.2 2.4z" fill="#1e1e1e"/></svg>
<svg style="left:493.3px;top:45px" width="4.4" height="2.4" viewBox="0 0 4.4 2.4" preserveAspectRatio="none"><path d="M0 0h4.4L2.2 2.4z" fill="#1e1e1e"/></svg>
<svg style="left:557.5px;top:45px" width="4.4" height="2.4" viewBox="0 0 4.4 2.4" preserveAspectRatio="none"><path d="M0 0h4.4L2.2 2.4z" fill="#1e1e1e"/></svg>
<svg style="left:622.7px;top:45px" width="4.4" height="2.4" viewBox="0 0 4.4 2.4" preserveAspectRatio="none"><path d="M0 0h4.4L2.2 2.4z" fill="#1e1e1e"/></svg>
<svg style="left:692px;top:45px" width="4.4" height="2.4" viewBox="0 0 4.4 2.4" preserveAspectRatio="none"><path d="M0 0h4.4L2.2 2.4z" fill="#1e1e1e"/></svg>
<svg style="left:163px;top:40.6px" width="9.4" height="9.4" viewBox="0 0 10 10" preserveAspectRatio="none"><path d="M3.4 0.6h3.2v2.8h2.8v3.2H6.6v2.8H3.4V6.6H0.6V3.4h2.8z" fill="#35c035" stroke="#1f9a22" stroke-width="0.7"/><path d="M4.2 1.6h1.2v6.8H4.2z" fill="#7ee27a" opacity=".7"/></svg>
<svg style="left:177.8px;top:40.6px" width="9.6" height="9.6" viewBox="0 0 10 10" preserveAspectRatio="none"><path d="M0.8 1.2h6v8h-6z" fill="#f4f6fa" stroke="#76797f" stroke-width="0.8"/><path d="M2 7.6h3.4M2 6h2" stroke="#aab" stroke-width="0.6"/><path d="M3.2 6.8L7.6 1.6l1.3 1.1L4.5 7.9L2.9 8.4z" fill="#3ea63a"/><circle cx="8.6" cy="1.5" r="1.2" fill="#e02a2a"/></svg>
<svg style="left:192.8px;top:40.6px" width="9.4" height="9.4" viewBox="0 0 10 10" preserveAspectRatio="none"><path d="M1 2.2L2.4 0.8L5 3.2L7.6 0.8L9.2 2.2L6.6 5L9.2 7.8L7.6 9.2L5 6.6L2.4 9.2L0.8 7.8L3.4 5z" fill="#f0401e" stroke="#d92b14" stroke-width="0.6"/><path d="M4 4l2 2" stroke="#ffa050" stroke-width="1"/></svg>
<svg style="left:299.6px;top:40.8px" width="10" height="10" viewBox="0 0 10 10" preserveAspectRatio="none"><path d="M3 5H5.4M5.4 2.2V7.8M5.4 2.2h1.6M5.4 7.8h1.6" stroke="#2d64b8" stroke-width="0.9" fill="none"/><rect x="0.2" y="3.2" width="4.6" height="3.4" rx="1.2" fill="#2a78d8"/><rect x="5.6" y="0.6" width="4.2" height="3.2" rx="1.2" fill="#34b05c"/><rect x="5.6" y="5.8" width="4.2" height="3.2" rx="1.2" fill="#2a78d8"/><path d="M1 4h3M6.4 1.4h2.6M6.4 6.6h2.6" stroke="#a8d0f8" stroke-width="0.6"/></svg>
<svg style="left:318.6px;top:40.6px" width="10.2" height="10.2" viewBox="0 0 10 10" preserveAspectRatio="none"><path d="M1.2 4.6A3.8 3.4 0 0 1 7.4 2.4" fill="none" stroke="#4a96e6" stroke-width="1.7"/><path d="M5.6 4L9.8 4.6L9.4 0.8z" fill="#1f66c8"/><path d="M8.8 5.4A3.8 3.4 0 0 1 2.6 7.6" fill="none" stroke="#4a96e6" stroke-width="1.7"/><path d="M4.4 6L0.2 5.4L0.6 9.2z" fill="#1f66c8"/></svg>
<svg style="left:338px;top:40.8px" width="9.4" height="9.4" viewBox="0 0 10 10" preserveAspectRatio="none"><path d="M0.8 0.8h6.8v8.4H0.8z" fill="#f4f7fc" stroke="#5a7fc0" stroke-width="0.9"/><path d="M2 2.4h4" stroke="#a8b4c8" stroke-width="0.6"/><circle cx="4.4" cy="5.4" r="2.2" fill="#9cc4f0" stroke="#3b72c4" stroke-width="0.8"/><path d="M6 7.4L8.6 9.2" stroke="#e08a1c" stroke-width="1.5"/></svg>
<svg style="left:390px;top:40.8px" width="9.6" height="9.6" viewBox="0 0 10 10" preserveAspectRatio="none"><rect x="0.5" y="1" width="9" height="8" fill="#eaf2fc" stroke="#6d8fc4" stroke-width="0.8"/><path d="M1.2 7L3.6 4.2L5.4 5.8L8.8 2.2" fill="none" stroke="#2f9a3a" stroke-width="1"/><path d="M1.2 4.4L3.6 6.6L6 5L8.8 6.8" fill="none" stroke="#3a6fd0" stroke-width="0.8"/></svg>
<svg style="left:453.6px;top:40.6px" width="9.6" height="9.6" viewBox="0 0 10 10" preserveAspectRatio="none"><rect x="1" y="0.6" width="7.4" height="9" rx="0.8" fill="#fdfdfd" stroke="#2d63bd" stroke-width="1"/><path d="M2.6 3.2l1 1L5.8 1.8M2.6 6.6l1 1L5.8 5.2" fill="none" stroke="#d8361c" stroke-width="1"/></svg>
<svg style="left:505.2px;top:40.8px" width="10" height="10" viewBox="0 0 10 10" preserveAspectRatio="none"><circle cx="3.8" cy="3.8" r="3" fill="#cfe4fa" stroke="#7a9cc8" stroke-width="1"/><path d="M6 6.2L9.2 9.4" stroke="#e0a22c" stroke-width="1.8" stroke-linecap="round"/></svg>
<svg style="left:569.2px;top:41px" width="9.6" height="9.6" viewBox="0 0 10 10" preserveAspectRatio="none"><path d="M0.4 1.2h9.2L6 5.2v3.6L4.2 9.6V5.2z" fill="#d9dde3" stroke="#6f747c" stroke-width="0.8"/><path d="M1.4 0.8h7.4" stroke="#8d939c" stroke-width="0.9"/></svg>
<svg style="left:636px;top:41px" width="9.2" height="9.2" viewBox="0 0 10 10" preserveAspectRatio="none"><rect x="0.8" y="1" width="7" height="8" rx="0.8" fill="#f3f5f8" stroke="#9aa4b4" stroke-width="0.8"/><path d="M2.4 3.4h3.8M2.4 5h3.8M2.4 6.6h3.8" stroke="#7f8ea6" stroke-width="0.7"/></svg>
<div class="a" style="left:161px;top:54px;width:743px;height:245px;background:#ababab"></div>
<div class="a" style="left:161px;top:54px;width:743px;height:116px;background:#fff"></div>
<div class="a" style="left:162px;top:55px;width:52px;height:13px;background:#d1e7f8"></div>
<div class="a" style="left:161px;top:68px;width:743px;height:15px;background:#1276d6"></div>
<div class="t" style="left:166.5px;top:57.0px;transform:scaleX(0.822);">Tag</div>
<div class="t" style="left:218.5px;top:57.0px;transform:scaleX(0.841);">Job Site</div>
<div class="t" style="left:313.6px;top:57.0px;transform:scaleX(0.891);">Status</div>
<div class="t" style="left:355.0px;top:57.0px;transform:scaleX(0.820);">PO</div>
<div class="t" style="left:385.5px;top:57.0px;transform:scaleX(0.869);">Work Order</div>
<div class="t" style="left:443.0px;top:57.0px;transform:scaleX(0.864);">Priority</div>
<div class="t" style="left:486.6px;top:57.0px;transform:scaleX(0.887);">Project</div>
<div class="t" style="left:531.6px;top:57.0px;transform:scaleX(0.845);">Step</div>
<div class="t" style="left:566.9px;top:57.0px;transform:scaleX(0.877);">Requested By</div>
<div class="t" style="left:632.2px;top:57.0px;transform:scaleX(0.869);">Customer Rep</div>
<div class="t" style="left:698.0px;top:57.0px;transform:scaleX(0.875);">Customer Requestor</div>
<div class="t" style="left:784.1px;top:57.0px;transform:scaleX(0.862);">Foreman</div>
<div class="t" style="left:833.0px;top:57.0px;transform:scaleX(0.820);">Builder</div>
<svg style="left:205.6px;top:60.2px" width="5.8" height="2.8" viewBox="0 0 5.8 2.8" preserveAspectRatio="none"><path d="M0 2.8L2.9 0L5.8 2.8z" fill="#9aa6b6"/></svg>
<div class="t" style="left:163.4px;top:71.3px;transform:scaleX(0.859);color:#fff;">Public Toilets</div>
<div class="t" style="left:215.4px;top:71.3px;transform:scaleX(0.892);color:#fff;">Strawberry Creek Park West</div>
<div class="t" style="left:311.0px;top:71.3px;transform:scaleX(0.921);color:#fff;">Off Rent</div>
<div class="t" style="left:352.5px;top:71.3px;transform:scaleX(0.820);color:#fff;">001</div>
<div class="t" style="left:440.4px;top:71.3px;transform:scaleX(0.836);color:#fff;">Medium</div>
<div class="t" style="left:484.0px;top:71.3px;transform:scaleX(0.912);color:#fff;">Maintenance</div>
<div class="t" style="left:528.9px;top:71.3px;transform:scaleX(0.909);color:#fff;">Three</div>
<div class="t" style="left:564.5px;top:71.3px;transform:scaleX(0.856);color:#fff;">Customer</div>
<div class="t" style="left:163.4px;top:85.9px;transform:scaleX(0.881);">Ranger Station</div>
<div class="t" style="left:215.4px;top:85.9px;transform:scaleX(0.892);">Strawberry Creek Park West</div>
<div class="t" style="left:311.0px;top:85.9px;transform:scaleX(0.873);">On Rent</div>
<div class="t" style="left:352.5px;top:85.9px;transform:scaleX(0.820);">002</div>
<div class="t" style="left:440.4px;top:85.9px;transform:scaleX(0.836);">Medium</div>
<div class="t" style="left:484.0px;top:85.9px;transform:scaleX(0.869);">Turnaround</div>
<div class="t" style="left:528.9px;top:85.9px;transform:scaleX(0.846);">One</div>
<div class="t" style="left:163.4px;top:100.5px;transform:scaleX(0.885);">Scaffold 01</div>
<div class="t" style="left:215.4px;top:100.5px;transform:scaleX(0.892);">Strawberry Creek Park West</div>
<div class="t" style="left:311.0px;top:100.5px;transform:scaleX(0.921);">Off Rent</div>
<div class="t" style="left:352.5px;top:100.5px;transform:scaleX(0.820);">001</div>
<div class="t" style="left:440.4px;top:100.5px;transform:scaleX(0.879);">Low</div>
<div class="t" style="left:484.0px;top:100.5px;transform:scaleX(0.912);">Maintenance</div>
<div class="t" style="left:528.9px;top:100.5px;transform:scaleX(0.846);">One</div>
<div class="t" style="left:564.5px;top:100.5px;transform:scaleX(0.922);">Internal</div>
<div class="t" style="left:629.5px;top:100.5px;transform:scaleX(0.868);">Tracey WILLIAMS</div>
<div class="t" style="left:695.0px;top:100.5px;transform:scaleX(0.868);">Tracey WILLIAMS</div>
<div class="t" style="left:781.5px;top:100.5px;transform:scaleX(0.827);">James Mason</div>
<div class="t" style="left:830.4px;top:100.5px;transform:scaleX(0.845);">James Mason</div>
<div class="a" style="left:902px;top:102px;width:1px;height:5px;background:#e39432"></div>
<div class="t" style="left:163.4px;top:115.1px;transform:scaleX(0.885);">Scaffold 02</div>
<div class="t" style="left:215.4px;top:115.1px;transform:scaleX(0.892);">Strawberry Creek Park West</div>
<div class="t" style="left:311.0px;top:115.1px;transform:scaleX(0.921);">Off Rent</div>
<div class="t" style="left:352.5px;top:115.1px;transform:scaleX(0.820);">001</div>
<div class="t" style="left:382.2px;top:115.1px;transform:scaleX(0.824);">002</div>
<div class="t" style="left:440.4px;top:115.1px;transform:scaleX(0.879);">Low</div>
<div class="t" style="left:484.0px;top:115.1px;transform:scaleX(0.869);">Turnaround</div>
<div class="t" style="left:528.9px;top:115.1px;transform:scaleX(0.846);">One</div>
<div class="t" style="left:629.5px;top:115.1px;transform:scaleX(0.868);">Tracey WILLIAMS</div>
<div class="t" style="left:695.0px;top:115.1px;transform:scaleX(0.889);">Steve Redgrave</div>
<div class="t" style="left:781.5px;top:115.1px;transform:scaleX(0.837);">Eirc Portman</div>
<div class="t" style="left:830.4px;top:115.1px;transform:scaleX(0.898);">Default Administrator</div>
<div class="a" style="left:902px;top:117px;width:1px;height:5px;background:#e39432"></div>
<div class="t" style="left:163.4px;top:129.7px;transform:scaleX(0.885);">Scaffold 03</div>
<div class="t" style="left:215.4px;top:129.7px;transform:scaleX(0.892);">Strawberry Creek Park West</div>
<div class="t" style="left:311.0px;top:129.7px;transform:scaleX(0.864);">Estimate</div>
<div class="t" style="left:352.5px;top:129.7px;transform:scaleX(0.820);">001</div>
<div class="t" style="left:440.4px;top:129.7px;transform:scaleX(0.879);">Low</div>
<div class="t" style="left:484.0px;top:129.7px;transform:scaleX(0.869);">Turnaround</div>
<div class="t" style="left:528.9px;top:129.7px;transform:scaleX(0.909);">Three</div>
<div class="t" style="left:564.5px;top:129.7px;transform:scaleX(0.922);">Internal</div>
<div class="t" style="left:629.5px;top:129.7px;transform:scaleX(0.868);">Tracey WILLIAMS</div>
<div class="t" style="left:781.5px;top:129.7px;transform:scaleX(0.855);">Peter Jones</div>
<div class="t" style="left:830.4px;top:129.7px;transform:scaleX(0.855);">Peter Jones</div>
<div class="a" style="left:902px;top:132px;width:1px;height:5px;background:#e39432"></div>
<div class="t" style="left:163.4px;top:144.3px;transform:scaleX(0.881);">Warehouse</div>
<div class="t" style="left:215.4px;top:144.3px;transform:scaleX(0.892);">Strawberry Creek Park West</div>
<div class="t" style="left:311.0px;top:144.3px;transform:scaleX(0.873);">On Rent</div>
<div class="t" style="left:352.5px;top:144.3px;transform:scaleX(0.820);">001</div>
<div class="t" style="left:382.2px;top:144.3px;transform:scaleX(0.824);">003</div>
<div class="t" style="left:440.4px;top:144.3px;transform:scaleX(0.879);">Low</div>
<div class="t" style="left:484.0px;top:144.3px;transform:scaleX(0.869);">Turnaround</div>
<div class="t" style="left:528.9px;top:144.3px;transform:scaleX(0.934);">Two</div>
<div class="t" style="left:564.5px;top:144.3px;transform:scaleX(0.856);">Customer</div>
<div class="t" style="left:629.5px;top:144.3px;transform:scaleX(0.876);">Dave Jones</div>
<div class="t" style="left:695.0px;top:144.3px;transform:scaleX(0.876);">Dave Jones</div>
<div class="t" style="left:781.5px;top:144.3px;transform:scaleX(0.855);">Peter Jones</div>
<div class="t" style="left:830.4px;top:144.3px;transform:scaleX(0.845);">James Mason</div>
<div class="a" style="left:902px;top:146px;width:1px;height:5px;background:#e39432"></div>
<div class="t" style="left:163.4px;top:158.9px;transform:scaleX(0.943);">Water tank</div>
<div class="t" style="left:215.4px;top:158.9px;transform:scaleX(0.892);">Strawberry Creek Park West</div>
<div class="t" style="left:311.0px;top:158.9px;transform:scaleX(0.921);">Off Rent</div>
<div class="t" style="left:352.5px;top:158.9px;transform:scaleX(0.820);">002</div>
<div class="t" style="left:440.4px;top:158.9px;transform:scaleX(0.833);">High</div>
<div class="t" style="left:484.0px;top:158.9px;transform:scaleX(0.869);">Turnaround</div>
<div class="t" style="left:528.9px;top:158.9px;transform:scaleX(0.909);">Three</div>
<div class="t" style="left:629.5px;top:158.9px;transform:scaleX(0.868);">Tracey WILLIAMS</div>
<div class="t" style="left:695.0px;top:158.9px;transform:scaleX(0.868);">Tracey WILLIAMS</div>
<div class="t" style="left:781.5px;top:158.9px;transform:scaleX(0.837);">Eirc Portman</div>
<div class="t" style="left:830.4px;top:158.9px;transform:scaleX(0.855);">Peter Jones</div>
<div class="a" style="left:902px;top:161px;width:1px;height:5px;background:#e39432"></div>
<svg style="left:161px;top:54px" width="743" height="120" viewBox="0 0 743 120" preserveAspectRatio="none"><path d="M0.6 0.5V14" stroke="#e0e0e0" stroke-width="0.8"/><path d="M0.6 14V28.8" stroke="#9a9a9a" stroke-width="0.9"/><path d="M0.6 28.6V116.2" stroke="#8e8e8e" stroke-width="0.85"/><path d="M52.6 0.5V14" stroke="#e0e0e0" stroke-width="0.8"/><path d="M52.6 14V28.8" stroke="#5f93d6" stroke-width="0.7"/><path d="M52.6 28.6V116.2" stroke="#8e8e8e" stroke-width="0.85"/><path d="M148.2 0.5V14" stroke="#e0e0e0" stroke-width="0.8"/><path d="M148.2 14V28.8" stroke="#5f93d6" stroke-width="0.7"/><path d="M148.2 28.6V116.2" stroke="#8e8e8e" stroke-width="0.85"/><path d="M189.7 0.5V14" stroke="#e0e0e0" stroke-width="0.8"/><path d="M189.7 14V28.8" stroke="#5f93d6" stroke-width="0.7"/><path d="M189.7 28.6V116.2" stroke="#8e8e8e" stroke-width="0.85"/><path d="M219.4 0.5V14" stroke="#e0e0e0" stroke-width="0.8"/><path d="M219.4 14V28.8" stroke="#5f93d6" stroke-width="0.7"/><path d="M219.4 28.6V116.2" stroke="#8e8e8e" stroke-width="0.85"/><path d="M277.6 0.5V14" stroke="#e0e0e0" stroke-width="0.8"/><path d="M277.6 14V28.8" stroke="#5f93d6" stroke-width="0.7"/><path d="M277.6 28.6V116.2" stroke="#8e8e8e" stroke-width="0.85"/><path d="M321.2 0.5V14" stroke="#e0e0e0" stroke-width="0.8"/><path d="M321.2 14V28.8" stroke="#5f93d6" stroke-width="0.7"/><path d="M321.2 28.6V116.2" stroke="#8e8e8e" stroke-width="0.85"/><path d="M366.1 0.5V14" stroke="#e0e0e0" stroke-width="0.8"/><path d="M366.1 14V28.8" stroke="#5f93d6" stroke-width="0.7"/><path d="M366.1 28.6V116.2" stroke="#8e8e8e" stroke-width="0.85"/><path d="M401.7 0.5V14" stroke="#e0e0e0" stroke-width="0.8"/><path d="M401.7 14V28.8" stroke="#5f93d6" stroke-width="0.7"/><path d="M401.7 28.6V116.2" stroke="#8e8e8e" stroke-width="0.85"/><path d="M466.7 0.5V14" stroke="#e0e0e0" stroke-width="0.8"/><path d="M466.7 14V28.8" stroke="#5f93d6" stroke-width="0.7"/><path d="M466.7 28.6V116.2" stroke="#8e8e8e" stroke-width="0.85"/><path d="M532.2 0.5V14" stroke="#e0e0e0" stroke-width="0.8"/><path d="M532.2 14V28.8" stroke="#5f93d6" stroke-width="0.7"/><path d="M532.2 28.6V116.2" stroke="#8e8e8e" stroke-width="0.85"/><path d="M618.7 0.5V14" stroke="#e0e0e0" stroke-width="0.8"/><path d="M618.7 14V28.8" stroke="#5f93d6" stroke-width="0.7"/><path d="M618.7 28.6V116.2" stroke="#8e8e8e" stroke-width="0.85"/><path d="M667.6 0.5V14" stroke="#e0e0e0" stroke-width="0.8"/><path d="M667.6 14V28.8" stroke="#5f93d6" stroke-width="0.7"/><path d="M667.6 28.6V116.2" stroke="#8e8e8e" stroke-width="0.85"/><path d="M739.5 0.5V14" stroke="#e0e0e0" stroke-width="0.8"/><path d="M739.5 14V28.8" stroke="#5f93d6" stroke-width="0.7"/><path d="M739.5 28.6V116.2" stroke="#8e8e8e" stroke-width="0.85"/><path d="M0.6 43.2H743" stroke="#8e8e8e" stroke-width="0.85"/><path d="M0.6 57.8H743" stroke="#8e8e8e" stroke-width="0.85"/><path d="M0.6 72.4H743" stroke="#8e8e8e" stroke-width="0.85"/><path d="M0.6 87.0H743" stroke="#8e8e8e" stroke-width="0.85"/><path d="M0.6 101.6H743" stroke="#8e8e8e" stroke-width="0.85"/><path d="M0.6 116.2H743" stroke="#8e8e8e" stroke-width="0.85"/><path d="M0.6 13.8H743" stroke="#bdbdbd" stroke-width="0.8"/><path d="M0.6 0.4H743" stroke="#cfcfcf" stroke-width="0.8" stroke-dasharray="1 1"/></svg>
<div class="a" style="left:158px;top:299px;width:746px;height:11px;background:#f2f2f2"></div>
<div class="a" style="left:172px;top:304px;width:535px;height:1px;background:#6e6e6e"></div>
<div class="a" style="left:161px;top:312px;width:51px;height:10px;background:#fafafa;border:1px solid #c8c8c8"></div>
<div class="t" style="left:164.0px;top:313.0px;transform:scaleX(0.920);">Items in list: 7</div>
<div class="a" style="left:158px;top:341px;width:746px;height:135px;background:#f5f5f5"></div>
<div class="a" style="left:158px;top:341px;width:746px;height:1px;background:#dfdfdf"></div>
<div class="a" style="left:158px;top:342px;width:3px;height:134px;background:#fdfdfd"></div>
<div class="tab" style="left:231px;top:329px;width:48px;height:12px"></div>
<div class="t" style="left:249.6px;top:331.0px;transform:scaleX(0.832);color:#111">Shipping</div>
<div class="tab" style="left:278px;top:329px;width:53px;height:12px"></div>
<div class="t" style="left:298.4px;top:331.0px;transform:scaleX(0.871);color:#111">Activities</div>
<div class="tab" style="left:330px;top:329px;width:59px;height:12px"></div>
<div class="t" style="left:348.5px;top:331.0px;transform:scaleX(0.884);color:#111">Inspections</div>
<div class="tab" style="left:388px;top:329px;width:66px;height:12px"></div>
<div class="t" style="left:407.2px;top:331.0px;transform:scaleX(0.826);color:#111">Access Points</div>
<div class="tab" style="left:453px;top:329px;width:64px;height:12px"></div>
<div class="t" style="left:472.6px;top:331.0px;transform:scaleX(0.904);color:#111">Attachments</div>
<div class="tab" style="left:516px;top:329px;width:44px;height:12px"></div>
<div class="t" style="left:534.4px;top:331.0px;transform:scaleX(0.863);color:#111">Details</div>
<div class="tab" style="left:559px;top:329px;width:45px;height:12px"></div>
<div class="t" style="left:577.0px;top:331.0px;transform:scaleX(0.912);color:#111">History</div>
<div class="tab on" style="left:161px;top:327px;width:71px;height:15px"></div>
<div class="t" style="left:179.9px;top:330.0px;transform:scaleX(0.868);color:#111">Bill of Materials</div>
<svg style="left:166px;top:329.2px" width="10.6" height="9.6" viewBox="0 0 10 10" preserveAspectRatio="none"><path d="M3 3.2c0-1.8.8-2.4 2.4-2.4s2.4.6 2.4 2.4" fill="none" stroke="#2e2408" stroke-width="1.1"/><path d="M0.6 3.2h9.6v2H0.6z" fill="#f7cf2e" stroke="#2e2408" stroke-width="0.9"/><path d="M1.6 5.2h7.6L8.6 9H2.2z" fill="#f9d83a" stroke="#2e2408" stroke-width="0.9"/><path d="M3.4 6.8h4" stroke="#fff6b8" stroke-width="0.9"/></svg>
<svg style="left:236px;top:330.6px" width="9.4" height="9.4" viewBox="0 0 10 10" preserveAspectRatio="none"><path d="M1 2.4L5 0.8L9 2.4V7.2L5 9.2L1 7.2z" fill="#f4be28" stroke="#8a2c16" stroke-width="0.9"/><path d="M3.4 1.6v7M5.4 2.8L9 2.4" stroke="#c8281c" stroke-width="1.2"/><path d="M1 2.4L5 4.2L9 2.4M5 4.2v5" fill="none" stroke="#8a2c16" stroke-width="0.7"/></svg>
<svg style="left:284px;top:330.4px" width="9.6" height="9.6" viewBox="0 0 10 10" preserveAspectRatio="none"><path d="M0.6 4.4h3V2.2h2.6v2.2h3V8H6.4L5 9.4L3.6 8H0.6z" fill="#37a844"/><path d="M3.6 0.6h3v2.6H9.2v3H6.2z" fill="#2e6fd0"/><circle cx="3" cy="3" r="1.3" fill="#2e6fd0"/><circle cx="7.4" cy="6.4" r="1.2" fill="#37a844"/></svg>
<svg style="left:334.4px;top:330.4px" width="9.4" height="9.4" viewBox="0 0 10 10" preserveAspectRatio="none"><circle cx="3.8" cy="3.8" r="3" fill="#cfe4fa" stroke="#7a9cc8" stroke-width="1"/><path d="M6 6.2L9.2 9.4" stroke="#e0a22c" stroke-width="1.8" stroke-linecap="round"/></svg>
<svg style="left:393.4px;top:330.4px" width="9.6" height="9.6" viewBox="0 0 10 10" preserveAspectRatio="none"><path d="M0.8 0.8h3v3h-3zM5.8 0.8h3v3h-3zM0.8 5.8h3v3h-3z" fill="none" stroke="#1a1a1a" stroke-width="1"/><path d="M5.4 5.4h1.6v1.6H5.4zM7.8 7.6h1.6v1.6H7.8zM7.8 5.2h1.4M5.6 8.6h1.2" fill="#1a1a1a" stroke="#1a1a1a" stroke-width="0.8"/></svg>
<svg style="left:459px;top:330.6px" width="9" height="9" viewBox="0 0 10 10" preserveAspectRatio="none"><path d="M1.4 2.4L6.4 7.6a1.6 1.6 0 0 0 2.2-2.2L3.8 0.8a1.1 1.1 0 0 0-1.6 1.6L6.6 6.8" fill="none" stroke="#2f78d0" stroke-width="1.1"/></svg>
<svg style="left:522.8px;top:330.8px" width="8.4" height="8.4" viewBox="0 0 10 10" preserveAspectRatio="none"><circle cx="4.6" cy="4.6" r="3.9" fill="#eef4fc" stroke="#aac0de" stroke-width="0.8"/><path d="M4.6 3.8V7" stroke="#2453b0" stroke-width="1.3"/><circle cx="4.6" cy="2.3" r="0.8" fill="#2453b0"/></svg>
<svg style="left:564.4px;top:330.6px" width="9" height="9" viewBox="0 0 10 10" preserveAspectRatio="none"><path d="M0.6 4h5.2v5.2H0.6z" fill="#f4d060" stroke="#ddb23a" stroke-width="0.6"/><circle cx="6.4" cy="3.2" r="2.7" fill="#f2f6fc" stroke="#a8b8d4" stroke-width="0.9"/><path d="M6.4 1.8v1.6l1 .6" stroke="#5d78ae" stroke-width="0.7" fill="none"/></svg>
<div class="t" style="left:178.8px;top:347.0px;transform:scaleX(0.898);color:#8d8d8d">Swap Re-Rent with Owned...</div>
<div class="sep" style="left:279px;top:346px;height:10px;background:#c4c4c4"></div>
<svg style="left:167.6px;top:346.5px" width="9" height="9" viewBox="0 0 10 10" preserveAspectRatio="none"><circle cx="4.5" cy="4.5" r="4" fill="#c2c2c2" stroke="#9c9c9c" stroke-width="1"/><path d="M2.4 3.6c1-1.6 3.2-1.6 4.2 0M6.6 5.4c-1 1.6-3.2 1.6-4.2 0" stroke="#f6f6f6" stroke-width="1.1" fill="none"/></svg>
<svg style="left:282.8px;top:346.4px" width="9.2" height="9.2" viewBox="0 0 10 10" preserveAspectRatio="none"><path d="M0.8 2h6v7.4h-6z" fill="#e9e9e9" stroke="#b4b4b4" stroke-width="0.8"/><path d="M3 7L8.2 1.4" stroke="#b9b9b9" stroke-width="1.4"/></svg>
<div class="a" style="left:165px;top:359px;width:739px;height:117px;background:#ababab;border-left:1px solid #8d8d8d;border-top:1px solid #6a6a6a"></div>
<div class="a" style="left:166px;top:360px;width:257px;height:13px;background:#fff"></div>
<div class="t" style="left:171.0px;top:363.0px;transform:scaleX(0.846);">PartNumber</div>
<div class="t" style="left:229.0px;top:363.0px;transform:scaleX(0.851);">Serial No.</div>
<div class="t" style="left:280.1px;top:363.0px;transform:scaleX(0.872);">Description</div>
<div class="t" style="left:335.9px;top:363.0px;transform:scaleX(0.909);">Weight</div>
<div class="t" style="left:379.7px;top:363.0px;transform:scaleX(0.869);">On Rent</div>
<svg style="left:166px;top:360px" width="257" height="13" viewBox="0 0 257 13" preserveAspectRatio="none"><path d="M58.7 0V13" stroke="#d6d6d6" stroke-width="0.9"/><path d="M109.5 0V13" stroke="#d6d6d6" stroke-width="0.9"/><path d="M165.9 0V13" stroke="#d6d6d6" stroke-width="0.9"/><path d="M209.0 0V13" stroke="#d6d6d6" stroke-width="0.9"/></svg>
<div class="a" style="left:0px;top:474px;width:904px;height:2px;background:linear-gradient(#3c3c3c,#0c0c0c 50%)"></div>
<div class="a" style="left:903px;top:0px;width:1px;height:476px;background:#3a3a3a"></div>
<div class="a" style="left:902px;top:0px;width:1px;height:476px;background:rgba(60,60,60,0.25)"></div>
<svg style="left:309px;top:261px" width="19" height="28" viewBox="0 0 19 28" preserveAspectRatio="none"><path d="M2 1.5V22.5L7 18L10.8 26.5L14.2 25L10.5 16.8H17.5z" fill="#fff" stroke="#111" stroke-width="1.6" stroke-linejoin="round"/></svg>
</body></html>
